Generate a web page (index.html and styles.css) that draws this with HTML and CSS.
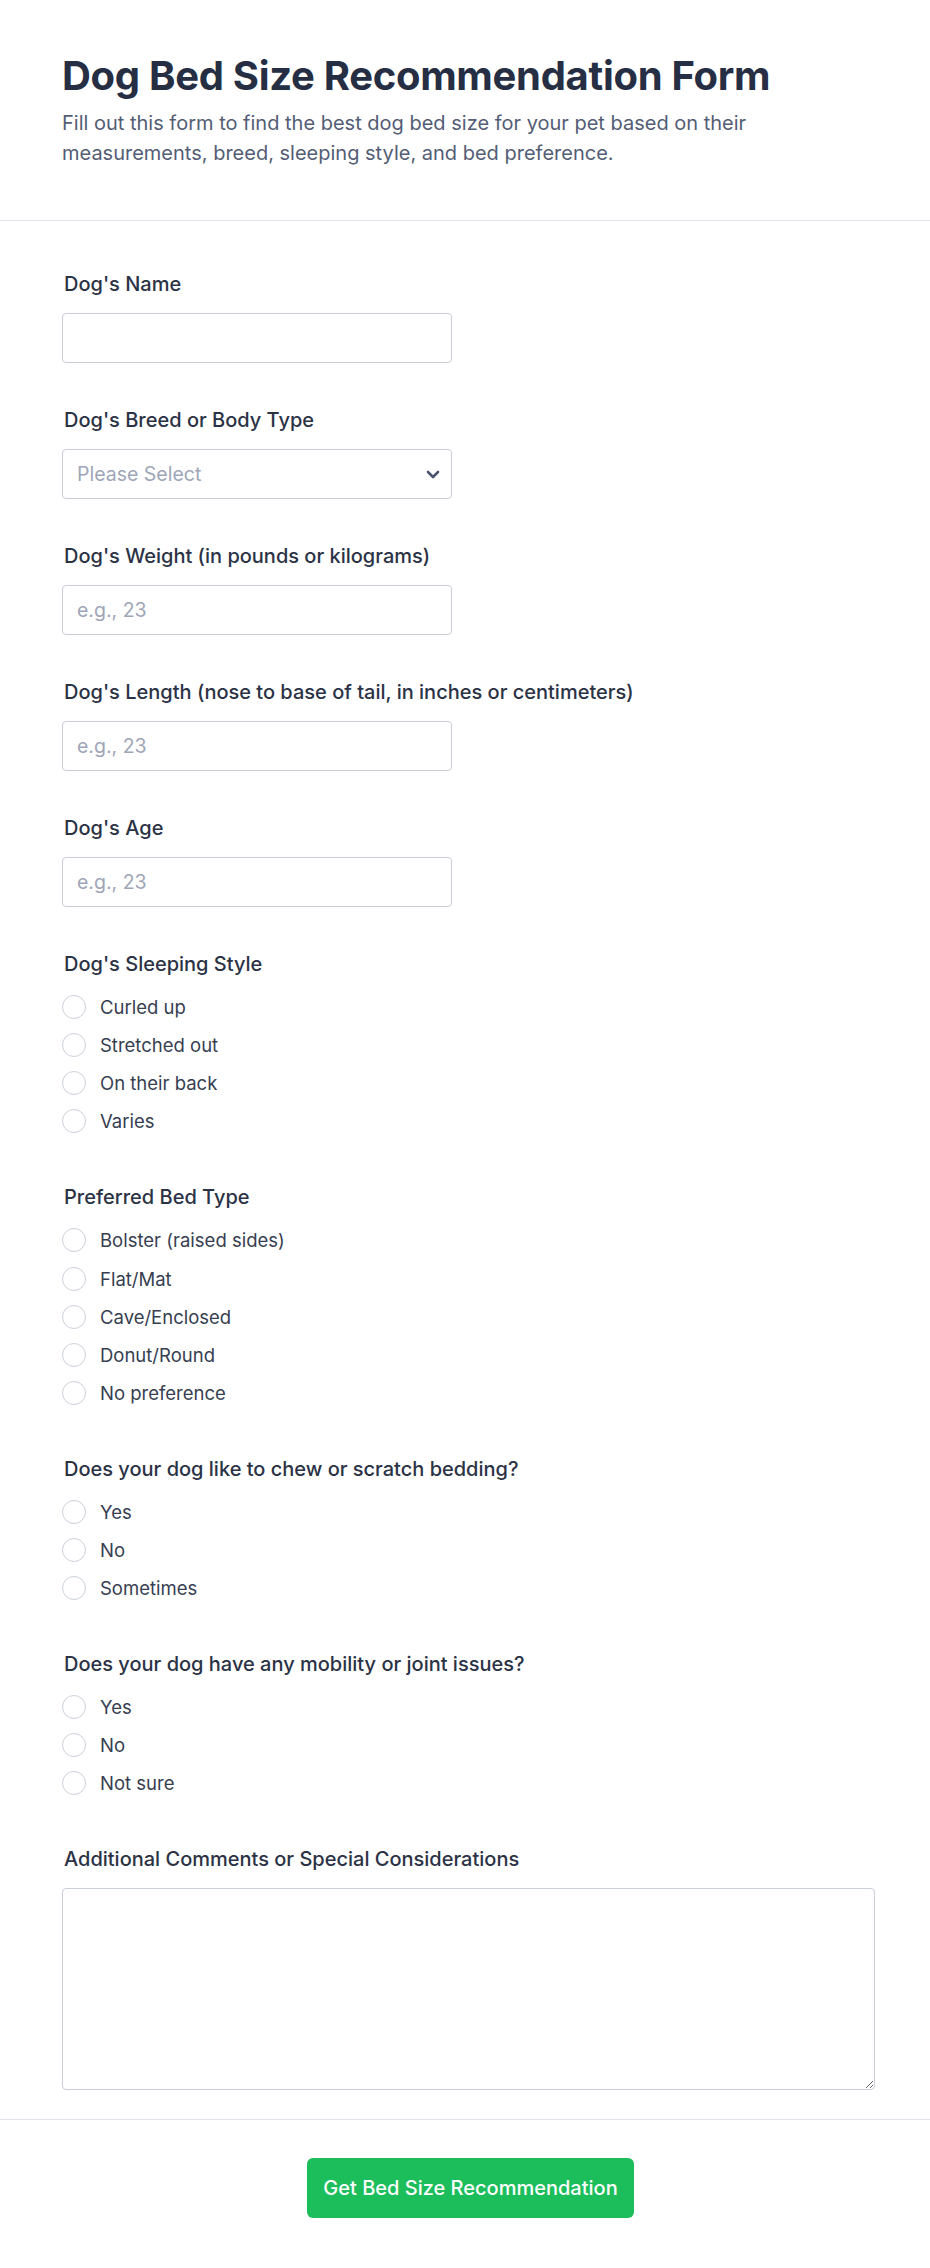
FILE: index.html
```html
<!DOCTYPE html>
<html lang="en">
<head>
    <meta charset="UTF-8">
    <meta name="viewport" content="width=device-width, initial-scale=1.0">
    <title>Dog Bed Size Recommendation Form</title>
    <link rel="stylesheet" href="styles.css">
</head>
<body>
    <header class="form-header">
        <h1 class="form-title">Dog Bed Size Recommendation Form</h1>
        <p class="form-intro">Fill out this form to find the best dog bed size for your pet based on their measurements, breed, sleeping style, and bed preference.</p>
    </header>
    <form class="bed-form" id="bedForm">
        <div class="fields">
            <div class="field">
                <label class="field-label" for="dogName">Dog's Name</label>
                <input type="text" id="dogName" class="text-input">
            </div>
            <div class="field">
                <label class="field-label" for="dogBreed">Dog's Breed or Body Type</label>
                <div class="select-wrap">
                    <select id="dogBreed" class="text-input select-input">
                        <option value="">Please Select</option>
                        <option>Small breed</option>
                        <option>Medium breed</option>
                        <option>Large breed</option>
                        <option>Giant breed</option>
                    </select>
                    <svg class="select-arrow" width="14" height="9" viewBox="0 0 14 9"><path d="M2 2l5 5 5-5" fill="none" stroke="#4b556e" stroke-width="2.6" stroke-linecap="round" stroke-linejoin="round"/></svg>
                </div>
            </div>
            <div class="field">
                <label class="field-label" for="dogWeight">Dog's Weight (in pounds or kilograms)</label>
                <input type="text" id="dogWeight" class="text-input" placeholder="e.g., 23">
            </div>
            <div class="field">
                <label class="field-label" for="dogLength">Dog's Length (nose to base of tail, in inches or centimeters)</label>
                <input type="text" id="dogLength" class="text-input" placeholder="e.g., 23">
            </div>
            <div class="field">
                <label class="field-label" for="dogAge">Dog's Age</label>
                <input type="text" id="dogAge" class="text-input" placeholder="e.g., 23">
            </div>
            <div class="field">
                <span class="field-label">Dog's Sleeping Style</span>
                <div class="options">
                    <label class="option"><input type="radio" name="sleep"> Curled up</label>
                    <label class="option"><input type="radio" name="sleep"> Stretched out</label>
                    <label class="option"><input type="radio" name="sleep"> On their back</label>
                    <label class="option"><input type="radio" name="sleep"> Varies</label>
                </div>
            </div>
            <div class="field">
                <span class="field-label">Preferred Bed Type</span>
                <div class="options">
                    <label class="option"><input type="radio" name="bed"> Bolster (raised sides)</label>
                    <label class="option"><input type="radio" name="bed"> Flat/Mat</label>
                    <label class="option"><input type="radio" name="bed"> Cave/Enclosed</label>
                    <label class="option"><input type="radio" name="bed"> Donut/Round</label>
                    <label class="option"><input type="radio" name="bed"> No preference</label>
                </div>
            </div>
            <div class="field">
                <span class="field-label">Does your dog like to chew or scratch bedding?</span>
                <div class="options">
                    <label class="option"><input type="radio" name="chew"> Yes</label>
                    <label class="option"><input type="radio" name="chew"> No</label>
                    <label class="option"><input type="radio" name="chew"> Sometimes</label>
                </div>
            </div>
            <div class="field">
                <span class="field-label">Does your dog have any mobility or joint issues?</span>
                <div class="options">
                    <label class="option"><input type="radio" name="joints"> Yes</label>
                    <label class="option"><input type="radio" name="joints"> No</label>
                    <label class="option"><input type="radio" name="joints"> Not sure</label>
                </div>
            </div>
            <div class="field">
                <label class="field-label" for="comments">Additional Comments or Special Considerations</label>
                <textarea id="comments" class="text-area"></textarea>
            </div>
        </div>
        <div class="form-footer">
            <button type="submit" class="submit-btn">Get Bed Size Recommendation</button>
        </div>
    </form>
    <script>
        document.getElementById('bedForm').addEventListener('submit', function(event) {
            event.preventDefault();
        });
    </script>
</body>
</html>
```

FILE: styles.css
```css
body {
    font-family: Inter, "Noto Sans", sans-serif;
    background-color: #ffffff;
    color: #2a3144;
    margin: 0;
    padding: 0;
}
.form-header {
    padding: 52px 55px 52px 62px;
    border-bottom: 1px solid #e2e5ec;
}
.form-title {
    margin: 0;
    font-size: 40px;
    line-height: 48px;
    font-weight: 700;
    letter-spacing: -0.3px;
    color: #262e44;
}
.form-intro {
    margin: 8px 0 0;
    max-width: 720px;
    font-size: 20px;
    line-height: 30px;
    color: #535d75;
}
.bed-form {
    margin: 0;
}
.fields {
    display: flex;
    flex-direction: column;
    gap: 43px;
    padding: 49px 55px 29px 62px;
}
.field-label {
    display: block;
    margin-bottom: 15px;
    padding-left: 2px;
    font-size: 20px;
    line-height: 28px;
    font-weight: 500;
    color: #2b3245;
}
.field .options {
    margin-top: -5px;
}
.text-input {
    box-sizing: border-box;
    display: block;
    width: 390px;
    height: 50px;
    margin: 0;
    padding: 0 14px;
    font-family: Inter, "Noto Sans", sans-serif;
    font-size: 19.5px;
    color: #2a3144;
    background-color: #fff;
    border: 1px solid #c9ced9;
    border-radius: 4px;
    outline: none;
}
.text-input::placeholder {
    color: #9ea6b7;
}
.select-wrap {
    position: relative;
    width: 390px;
}
.select-input {
    appearance: none;
    -webkit-appearance: none;
    color: #9ea6b7;
}
.select-arrow {
    position: absolute;
    top: 21px;
    right: 12px;
    pointer-events: none;
}
.options {
    display: flex;
    flex-direction: column;
}
.option {
    display: flex;
    align-items: center;
    gap: 14px;
    height: 38.1px;
    font-size: 18.5px;
    color: #373e51;
    cursor: pointer;
}
.option input[type="radio"] {
    appearance: none;
    -webkit-appearance: none;
    box-sizing: border-box;
    width: 24px;
    height: 24px;
    margin: 0;
    border: 1.5px solid #cbd0da;
    border-radius: 50%;
    background-color: #fff;
    cursor: pointer;
}
.option input[type="radio"]:checked {
    border: 7px solid #1cbd5b;
}
.text-area {
    box-sizing: border-box;
    display: block;
    width: 100%;
    height: 202px;
    margin: 0;
    padding: 12px 14px;
    font-family: Inter, "Noto Sans", sans-serif;
    font-size: 19.5px;
    border: 1px solid #c9ced9;
    border-radius: 4px;
    outline: none;
}
.form-footer {
    border-top: 1px solid #e2e5ec;
    padding: 38px 55px 49px 66px;
    text-align: center;
}
.submit-btn {
    font-family: Inter, "Noto Sans", sans-serif;
    font-size: 20px;
    line-height: 28px;
    font-weight: 500;
    padding: 16px 16px;
    color: #fff;
    background-color: #1cbd5b;
    border: none;
    border-radius: 6px;
    cursor: pointer;
}
.submit-btn:hover {
    background-color: #17a24e;
}
```
